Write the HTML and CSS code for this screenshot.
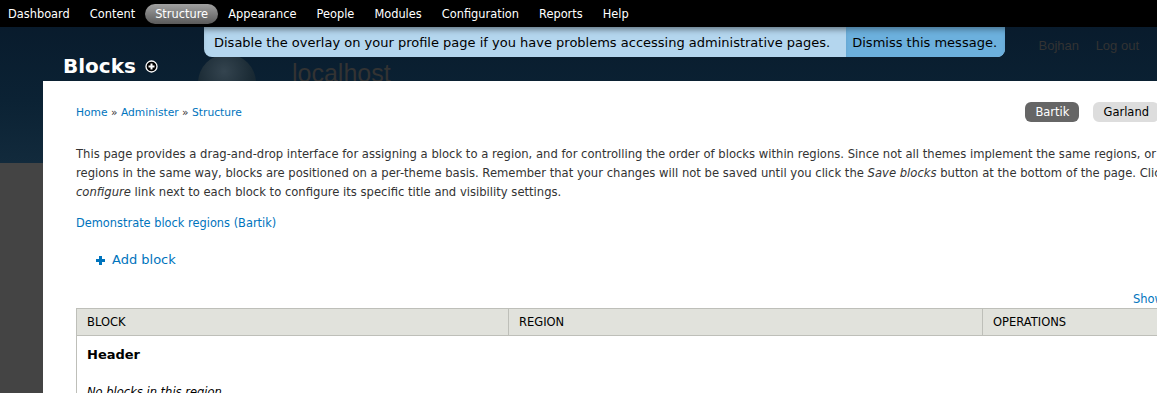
FILE: index.html
```html
<!DOCTYPE html>
<html lang="en">
<head>
    <meta charset="UTF-8">
    <title>Blocks | localhost</title>
    <link rel="stylesheet" href="styles.css">
</head>
<body>
    <div class="toolbar">
        <a href="#">Dashboard</a>
        <a href="#">Content</a>
        <a href="#" class="active">Structure</a>
        <a href="#">Appearance</a>
        <a href="#">People</a>
        <a href="#">Modules</a>
        <a href="#">Configuration</a>
        <a href="#">Reports</a>
        <a href="#">Help</a>
    </div>

    <div class="header">
        <div class="site">
            <span class="logo"></span>
            <span class="site-name">localhost</span>
        </div>
        <h1 class="title">Blocks <span class="add-shortcut">
            <svg width="13" height="13" viewBox="0 0 13 13">
                <circle cx="6.5" cy="6.5" r="5.5" fill="#000" stroke="#fff" stroke-width="1.3"/>
                <path d="M6.5 3.5v6M3.5 6.5h6" stroke="#fff" stroke-width="2"/>
            </svg></span></h1>
        <div class="user-links">
            <a href="#">Bojhan</a>
            <a href="#">Log out</a>
        </div>
        <div class="overlay-message">
            <span>Disable the overlay on your profile page if you have problems accessing administrative pages.</span>
            <a href="#" class="dismiss">Dismiss this message.</a>
        </div>
    </div>

    <div class="page">
        <div class="top-row">
            <div class="breadcrumb">
                <a href="#">Home</a> » <a href="#">Administer</a> » <a href="#">Structure</a>
            </div>
            <ul class="tabs">
                <li><a href="#" class="active">Bartik</a></li>
                <li><a href="#">Garland</a></li>
            </ul>
        </div>

        <p class="help">This page provides a drag-and-drop interface for assigning a block to a region, and for controlling the order of blocks within regions. Since not all themes implement the same regions, or display regions in the same way, blocks are positioned on a per-theme basis. Remember that your changes will not be saved until you click the <em>Save blocks</em> button at the bottom of the page. Click the <em>configure</em> link next to each block to configure its specific title and visibility settings.</p>

        <p class="demo"><a href="#">Demonstrate block regions (Bartik)</a></p>

        <ul class="action-links">
            <li><a href="#"><svg class="plus" width="9" height="9" viewBox="0 0 9 9">
                <path d="M4.5 0v9M0 4.5h9" stroke="#0074bd" stroke-width="3"/>
            </svg>Add block</a></li>
        </ul>

        <div class="weights"><a href="#">Show row weights</a></div>

        <table class="blocks">
            <thead>
                <tr>
                    <th class="col-block">Block</th>
                    <th class="col-region">Region</th>
                    <th class="col-ops">Operations</th>
                </tr>
            </thead>
            <tbody>
                <tr class="region-title">
                    <td colspan="3">Header</td>
                </tr>
                <tr class="region-message">
                    <td colspan="3"><em>No blocks in this region</em></td>
                </tr>
            </tbody>
        </table>
    </div>
</body>
</html>
```

FILE: styles.css
```css
html, body {
    margin: 0;
    padding: 0;
    overflow: hidden;
}

body {
    width: 1157px;
    height: 393px;
    font-family: "DejaVu Sans", Verdana, sans-serif;
    background: linear-gradient(#08192a 0, #0b2234 100px, #122a3c 163px, #444 163px);
    color: #333;
}

a {
    color: #0074bd;
    text-decoration: none;
}

.toolbar {
    height: 27px;
    background: #000;
    display: flex;
    align-items: center;
    padding-left: 0;
    font-size: 11.4px;
}

.toolbar a {
    color: #fff;
    padding: 3px 10px;
    border-radius: 10px;
    line-height: 14px;
}

.toolbar a:first-child {
    margin-left: -2px;
}

.toolbar a.active {
    background: linear-gradient(#a0a0a0, #5a5a5a);
}

.header {
    position: relative;
    height: 54px;
    display: flex;
    align-items: flex-start;
    overflow: hidden;
}

.site {
    position: absolute;
    left: 198px;
    top: 27px;
    display: flex;
    align-items: flex-start;
}

.logo {
    width: 58px;
    height: 58px;
    border-radius: 50%;
    background: radial-gradient(circle at 45% 30%, #34444f, #1a2a34 55%, #0c1e2b);
}

.site-name {
    margin-left: 36px;
    margin-top: 5px;
    font-family: "Liberation Sans", Arial, sans-serif;
    font-size: 25px;
    color: #333;
}

.title {
    margin: 0;
    padding: 27px 0 0 63px;
    font-size: 20px;
    font-weight: bold;
    color: #fff;
    line-height: 24px;
    display: flex;
    align-items: center;
    position: relative;
}

.add-shortcut {
    margin-left: 9px;
    display: inline-flex;
}

.user-links {
    margin-left: auto;
    padding: 11px 18px 0 0;
    font-family: "Liberation Sans", Arial, sans-serif;
    font-size: 13px;
    line-height: 16px;
}

.user-links a {
    color: #333;
    margin-left: 13px;
}

.overlay-message {
    position: absolute;
    left: 204px;
    top: 0;
    height: 30px;
    display: flex;
    align-items: stretch;
    background: #b4d6ee;
    border-radius: 0 0 8px 8px;
    overflow: hidden;
    font-size: 13px;
    color: #000;
    box-shadow: inset 0 6px 6px -4px rgba(0, 0, 0, 0.5);
}

.overlay-message span {
    padding: 8px 16px 0 10px;
}

.overlay-message .dismiss {
    background: #6cb0dd;
    color: #000;
    padding: 8px 8px 0 6px;
    box-shadow: inset 0 6px 6px -4px rgba(0, 0, 0, 0.4);
}

.page {
    margin-left: 43px;
    width: 1250px;
    height: 312px;
    background: #fff;
    padding: 0 0 0 33px;
    box-sizing: border-box;
}

.top-row {
    display: flex;
    justify-content: space-between;
    align-items: center;
    width: 1083px;
    padding-top: 20px;
}

.breadcrumb {
    font-size: 10.7px;
    line-height: 20px;
    padding-top: 2px;
    color: #333;
}

.tabs {
    list-style: none;
    margin: 0;
    padding: 0;
    display: flex;
    gap: 14px;
}

.tabs a {
    display: block;
    background: #ddd;
    color: #000;
    font-size: 11.5px;
    line-height: 20px;
    padding: 0 10px;
    border-radius: 6px;
}

.tabs a.active {
    background: #666;
    color: #fff;
}

.help {
    margin: 22px 0 0;
    width: 1157px;
    font-size: 11.6px;
    line-height: 19px;
}

.demo {
    margin: 12px 0 0;
    font-size: 11.4px;
    line-height: 19px;
}

.action-links {
    list-style: none;
    margin: 18px 0 0;
    padding: 0 0 0 20px;
    font-size: 13px;
    line-height: 18px;
}

.plus {
    margin-right: 7px;
    vertical-align: -1px;
}

.weights {
    width: 1161px;
    text-align: right;
    font-size: 11.5px;
    line-height: 16px;
    margin-top: 22px;
}

.blocks {
    border-collapse: collapse;
    margin-top: 1px;
    font-size: 11.5px;
}

.blocks th {
    background: #e1e2dc;
    border: 1px solid #bebfb9;
    text-align: left;
    font-weight: normal;
    text-transform: uppercase;
    color: #000;
    height: 26px;
    padding: 0 10px;
}

.col-block { width: 411px; }
.col-region { width: 453px; }
.col-ops { width: 230px; }

.blocks td {
    border-left: 1px solid #bebfb9;
    padding: 0 10px;
}

.region-title td {
    font-weight: bold;
    color: #000;
    font-size: 13px;
    height: 37px;
}

.region-message td {
    height: 38px;
    color: #000;
}
```
